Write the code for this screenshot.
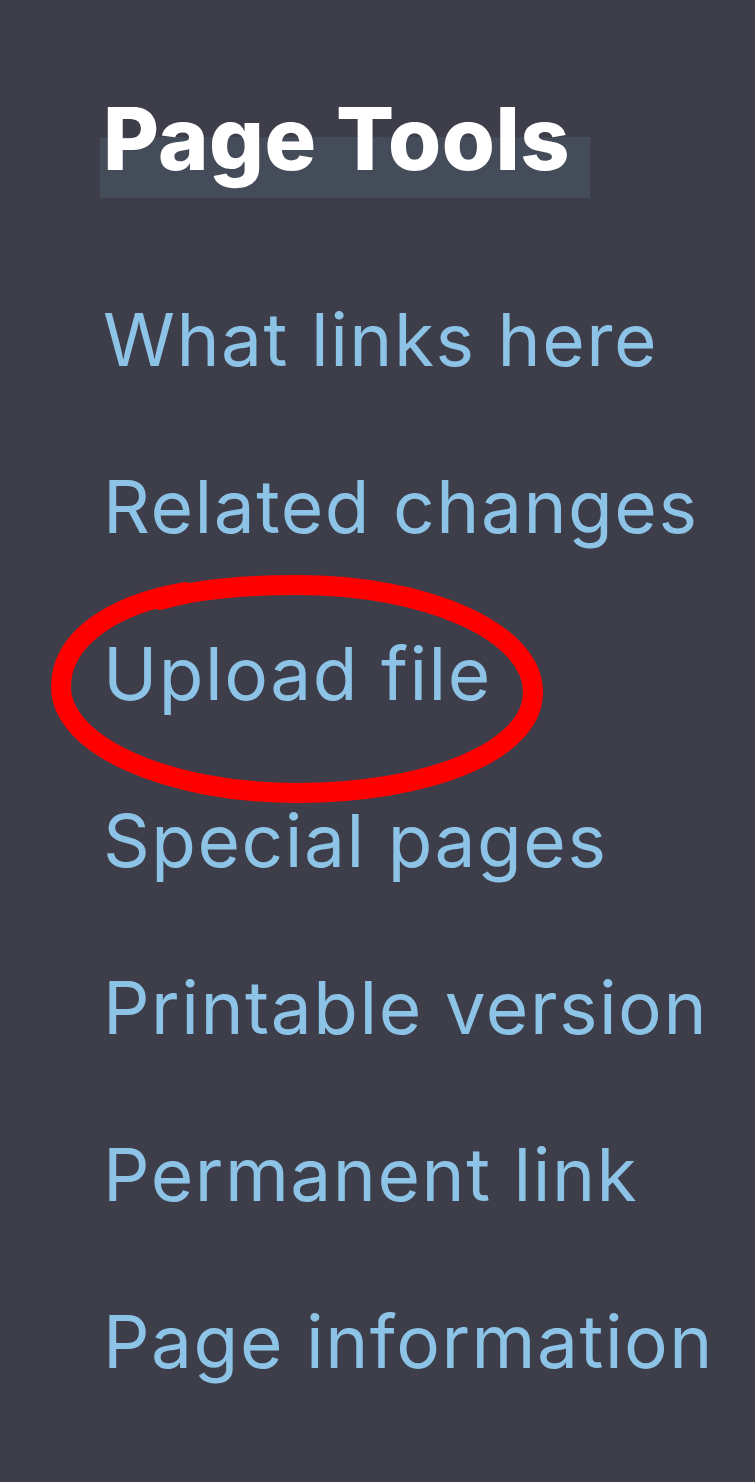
const links = [
  "What links here",
  "Related changes",
  "Upload file",
  "Special pages",
  "Printable version",
  "Permanent link",
  "Page information",
];

export default function App() {
  return (
    <div className="relative h-[1482px] w-[755px] overflow-hidden bg-[#3d3e49] font-['Inter',sans-serif]">
      <div className="pl-[103px] pt-[89px]">
        <div className="relative h-[100px]">
          <span className="absolute left-[-3px] top-[48px] h-[61px] w-[490px] bg-[#454c59]" />
          <h2 className="relative text-[86px] font-extrabold leading-[100px] tracking-[0.5px] text-white">
            Page Tools
          </h2>
        </div>
        <ul className="mt-[67px]">
          {links.map((l) => (
            <li key={l} className="text-[73px] leading-[167px] tracking-[1.5px] text-[#8cc3e6] whitespace-nowrap">
              <a href="#">{l}</a>
            </li>
          ))}
        </ul>
      </div>
      <svg className="absolute left-0 top-0 pointer-events-none" width="755" height="1482" viewBox="0 0 755 1482">
        <path
          d="M160 600 C 200 588, 250 585, 297 585 C 427 585, 533 632, 533 692 C 533 752, 427 793, 297 793 C 167 793, 61 745, 61 687 C 61 640, 110 605, 185 592"
          fill="none"
          stroke="#ff0000"
          strokeWidth="20"
          strokeLinecap="round"
        />
      </svg>
    </div>
  );
}
